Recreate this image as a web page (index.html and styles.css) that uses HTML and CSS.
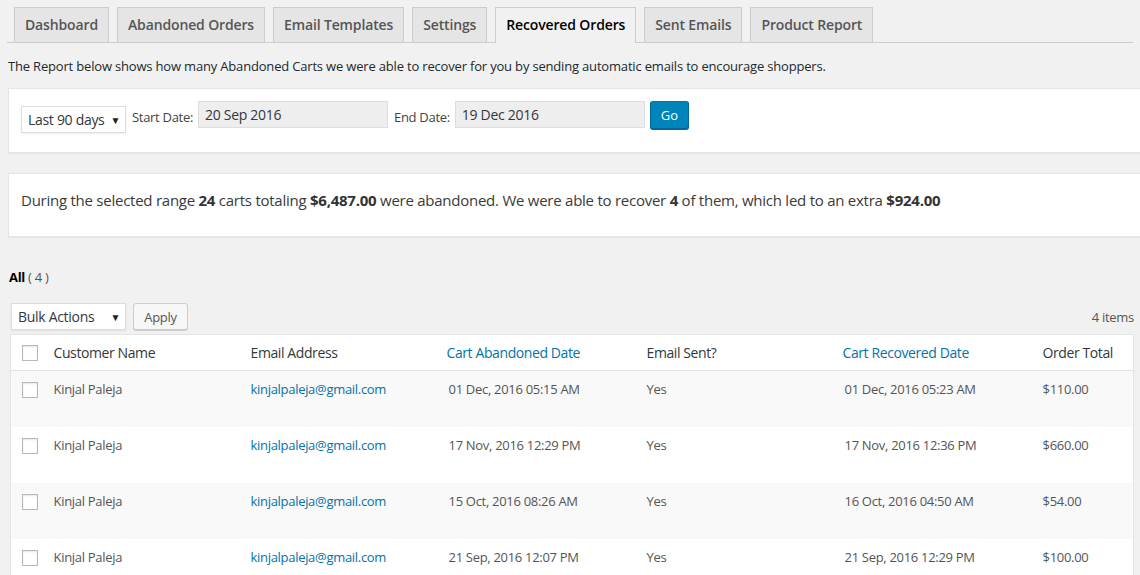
FILE: index.html
```html
<!DOCTYPE html>
<html>
<head>
<meta charset="utf-8">
<link rel="stylesheet" href="styles.css">
</head>
<body>
<div class="wrap">
  <nav class="tabs">
    <a class="tab">Dashboard</a>
    <a class="tab">Abandoned Orders</a>
    <a class="tab">Email Templates</a>
    <a class="tab">Settings</a>
    <a class="tab active">Recovered Orders</a>
    <a class="tab">Sent Emails</a>
    <a class="tab">Product Report</a>
  </nav>
  <p class="desc">The Report below shows how many Abandoned Carts we were able to recover for you by sending automatic emails to encourage shoppers.</p>

  <div class="box filter">
    <div class="select sel-range"><span>Last 90 days</span><span class="arrow">▼</span></div>
    <label class="lbl">Start Date:</label>
    <div class="date">20 Sep 2016</div>
    <label class="lbl">End Date:</label>
    <div class="date">19 Dec 2016</div>
    <button class="btn-primary">Go</button>
  </div>

  <div class="box summary">
    <p>During the selected range <b>24</b> carts totaling <b>$6,487.00</b> were abandoned. We were able to recover <b>4</b> of them, which led to an extra <b>$924.00</b></p>
  </div>

  <div class="subsub"><b>All</b> <span class="count">( 4 )</span></div>

  <div class="tablenav">
    <div class="select sel-bulk"><span>Bulk Actions</span><span class="arrow">▼</span></div>
    <button class="btn">Apply</button>
    <span class="items">4 items</span>
  </div>

  <table class="list">
    <colgroup>
      <col class="c-cb"><col class="c-name"><col class="c-email"><col class="c-ab"><col class="c-sent"><col class="c-rec"><col class="c-total">
    </colgroup>
    <thead>
      <tr>
        <th class="cb"><span class="check"></span></th>
        <th>Customer Name</th>
        <th>Email Address</th>
        <th class="sortable"><a>Cart Abandoned Date</a></th>
        <th>Email Sent?</th>
        <th class="sortable"><a>Cart Recovered Date</a></th>
        <th>Order Total</th>
      </tr>
    </thead>
    <tbody>
      <tr class="alt">
        <td class="cb"><span class="check"></span></td>
        <td>Kinjal Paleja</td>
        <td><a class="link">kinjalpaleja@gmail.com</a></td>
        <td>01 Dec, 2016 05:15 AM</td>
        <td>Yes</td>
        <td>01 Dec, 2016 05:23 AM</td>
        <td>$110.00</td>
      </tr>
      <tr>
        <td class="cb"><span class="check"></span></td>
        <td>Kinjal Paleja</td>
        <td><a class="link">kinjalpaleja@gmail.com</a></td>
        <td>17 Nov, 2016 12:29 PM</td>
        <td>Yes</td>
        <td>17 Nov, 2016 12:36 PM</td>
        <td>$660.00</td>
      </tr>
      <tr class="alt">
        <td class="cb"><span class="check"></span></td>
        <td>Kinjal Paleja</td>
        <td><a class="link">kinjalpaleja@gmail.com</a></td>
        <td>15 Oct, 2016 08:26 AM</td>
        <td>Yes</td>
        <td>16 Oct, 2016 04:50 AM</td>
        <td>$54.00</td>
      </tr>
      <tr>
        <td class="cb"><span class="check"></span></td>
        <td>Kinjal Paleja</td>
        <td><a class="link">kinjalpaleja@gmail.com</a></td>
        <td>21 Sep, 2016 12:07 PM</td>
        <td>Yes</td>
        <td>21 Sep, 2016 12:29 PM</td>
        <td>$100.00</td>
      </tr>
    </tbody>
  </table>
</div>
</body>
</html>
```

FILE: styles.css
```css
html, body {
  margin: 0;
  padding: 0;
  background: #f1f1f1;
  overflow: hidden;
}
body {
  font-family: "Open Sans", "Noto Sans", sans-serif;
  font-size: 13px;
  color: #444;
  letter-spacing: -0.3px;
}
.wrap {
  padding-left: 8px;
  width: 1125px;
}
.tabs {
  display: flex;
  gap: 8px;
  padding: 7px 0 0 7px;
  margin-left: -1px;
  border-bottom: 1px solid #ccc;
  height: 35px;
  box-sizing: content-box;
}
.tab {
  display: block;
  padding: 5px 10px 5px 10px;
  line-height: 24px;
  height: 24px;
  font-size: 14px;
  font-weight: 600;
  color: #555;
  background: #e5e5e5;
  border: 1px solid #ccc;
  border-bottom: none;
  letter-spacing: -0.14px;
}
.tab.active {
  background: #f1f1f1;
  color: #000;
  height: 25px;
}
.desc {
  margin: 0;
  padding: 13px 0 0 0;
  line-height: 20px;
  height: 32px;
  color: #23282d;
  letter-spacing: -0.18px;
}
.box {
  background: #fff;
  border: 1px solid #e5e5e5;
  box-shadow: 0 1px 1px rgba(0,0,0,.04);
  width: calc(100% + 30px);
  box-sizing: border-box;
}
.filter {
  display: flex;
  align-items: flex-start;
  padding: 12px 12px 18px 12px;
  height: 65px;
}
.select {
  display: flex;
  align-items: center;
  justify-content: space-between;
  height: 27px;
  box-sizing: border-box;
  border: 1px solid #ddd;
  background: #fff;
  color: #32373c;
  padding: 0 5px 0 6px;
  font-size: 14px;
  box-shadow: 0 1px 2px rgba(0,0,0,.07);
}
.select .arrow {
  font-size: 10px;
  color: #222;
  padding-top: 1px;
}
.sel-range {
  width: 105px;
  margin-top: 5px;
}
.lbl {
  font-size: 13px;
  color: #444;
  margin: 6px 5px 0 6px;
  line-height: 20px;
}
.date {
  width: 190px;
  height: 27px;
  box-sizing: border-box;
  background: #eee;
  border: 1px solid #ddd;
  padding: 3px 6px 0 6px;
  font-size: 14px;
  line-height: 20px;
  color: #32373c;
}
.btn-primary {
  margin-left: 5px;
  width: 39px;
  height: 28px;
  background: #0085ba;
  border: 1px solid;
  border-color: #0073aa #006799 #006799;
  border-radius: 3px;
  box-shadow: 0 1px 0 #006799;
  color: #fff;
  font-family: inherit;
  font-size: 13px;
  padding: 0;
}
.summary {
  margin-top: 20px;
  height: 64px;
  padding: 16px 12px 0 12px;
  font-size: 15px;
  color: #3a3a3a;
  letter-spacing: -0.25px;
}
.summary p {
  margin: 0;
  line-height: 20px;
  white-space: nowrap;
}
.summary b { color: #333; }
.subsub {
  margin-top: 30px;
  padding-left: 1px;
  line-height: 20px;
  height: 20px;
}
.subsub b { color: #000; }
.subsub .count { color: #555; }
.tablenav {
  display: flex;
  align-items: center;
  margin-top: 16px;
  padding-left: 3px;
  height: 27px;
}
.sel-bulk {
  width: 115px;
}
.btn {
  margin-left: 7px;
  width: 55px;
  height: 27px;
  background: #f7f7f7;
  border: 1px solid #ccc;
  border-radius: 3px;
  box-shadow: 0 1px 0 #ccc;
  color: #555;
  font-family: inherit;
  font-size: 13px;
  letter-spacing: -0.3px;
  padding: 0;
}
.items {
  margin-left: auto;
  margin-right: -1px;
  color: #555;
}
.list {
  margin: 4px 0 0 2px;
  width: 1123px;
  border-collapse: collapse;
  table-layout: fixed;
  background: #fff;
  border: 1px solid #e5e5e5;
}
.c-cb { width: 33px; }
.c-name { width: 197px; }
.c-email { width: 198px; }
.c-ab { width: 198px; }
.c-sent { width: 198px; }
.c-rec { width: 198px; }
.c-total { width: 101px; }
.list thead tr { height: 36px; }
.list th {
  text-align: left;
  font-weight: 400;
  font-size: 14px;
  color: #32373c;
  padding: 0 10px;
  border-bottom: 1px solid #e1e1e1;
  white-space: nowrap;
  letter-spacing: -0.4px;
}
.list th.sortable { padding-left: 8px; }
.list th a { color: #0073aa; }
.list tbody tr { height: 56px; }
.list td {
  vertical-align: top;
  padding: 8px 10px 0 10px;
  line-height: 20px;
  color: #555;
  white-space: nowrap;
}
.list tr.alt td { background: #f9f9f9; }
.list th.cb, .list td.cb {
  padding: 0 0 0 11px;
}
.list td.cb { padding-top: 11px; }
.list th.cb { vertical-align: middle; }
.check {
  display: block;
  width: 16px;
  height: 16px;
  box-sizing: border-box;
  border: 1px solid #b4b9be;
  background: #fff;
  box-shadow: inset 0 1px 2px rgba(0,0,0,.1);
}
.link { color: #0073aa; }
```
